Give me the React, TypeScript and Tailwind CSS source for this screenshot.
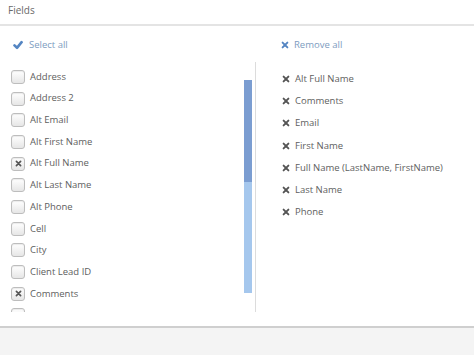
import React from 'react';

// field lists
const allFields = [
  { name: 'Address', on: false },
  { name: 'Address 2', on: false },
  { name: 'Alt Email', on: false },
  { name: 'Alt First Name', on: false },
  { name: 'Alt Full Name', on: true },
  { name: 'Alt Last Name', on: false },
  { name: 'Alt Phone', on: false },
  { name: 'Cell', on: false },
  { name: 'City', on: false },
  { name: 'Client Lead ID', on: false },
  { name: 'Comments', on: true },
];

const picked = ['Alt Full Name', 'Comments', 'Email', 'First Name', 'Full Name (LastName, FirstName)', 'Last Name', 'Phone'];

const HeavyX = ({ className }: { className?: string }) => (
  <svg viewBox="0 0 10 10" className={className} fill="none" stroke="currentColor" strokeWidth="2.4" strokeLinecap="round">
    <path d="M2 2 L8 8 M8 2 L2 8" />
  </svg>
);

const Tick = ({ className }: { className?: string }) => (
  <svg viewBox="0 0 10 10" className={className} fill="none" stroke="currentColor" strokeWidth="2.6" strokeLinecap="round" strokeLinejoin="round">
    <path d="M1.5 5.4 L4 7.8 L8.6 2.2" />
  </svg>
);

const Checkbox = ({ on }: { on: boolean }) => (
  <span className="flex h-[14px] w-[14px] shrink-0 items-center justify-center rounded-[3px] border border-[#bdbdbd] bg-gradient-to-b from-white to-[#e6e6e6] shadow-[inset_0_1px_1px_rgba(0,0,0,0.08)]">
    {on && <HeavyX className="h-[7px] w-[7px] text-[#555]" />}
  </span>
);

const App = () => {
  return (
    <div className="flex h-[355px] w-[474px] flex-col overflow-hidden bg-white font-['Open_Sans',sans-serif] text-[9.5px] text-[#606060]">
      {/* header */}
      <div className="flex h-[26px] shrink-0 items-center border-b-2 border-[#e4e4e4] px-2 pb-[3px] text-[10px] text-[#6a6a6a]">Fields</div>

      <div className="flex h-[300px] shrink-0">
        {/* left column */}
        <div className="flex w-[256px] flex-col">
          <div className="mt-[9px] flex h-[20px] items-center gap-[6px] pl-[13px] text-[#7d9cc0]">
            <Tick className="h-[10px] w-[10px] text-[#5485c2]" />
            <span>Select all</span>
          </div>
          <div className="mt-[7px] flex h-[250px] border-r border-[#dcdcdc]">
            <div className="flex-1 overflow-hidden pt-[4px]">
              {allFields.map((f) => (
                <div key={f.name} className="flex h-[21.7px] items-center gap-[5px] pl-[11px]">
                  <Checkbox on={f.on} />
                  <span>{f.name}</span>
                </div>
              ))}
              {/* next row, cut by the scroll box */}
              <div className="flex h-[21.7px] items-center pl-[11px]">
                <Checkbox on={false} />
              </div>
            </div>
            <div className="mr-[3px] w-[8px] pt-[18px]">
              <div className="h-[102px] bg-[#7b9dd1]" />
              <div className="h-[111px] bg-[#a5c7ed]" />
            </div>
          </div>
        </div>

        {/* right column */}
        <div className="flex flex-1 flex-col pl-[25px]">
          <div className="mt-[9px] flex h-[20px] items-center gap-[5px] text-[#7d9cc0]">
            <HeavyX className="h-[8px] w-[8px] text-[#5485c2]" />
            <span>Remove all</span>
          </div>
          <div className="mt-[13px]">
            {picked.map((p) => (
              <div key={p} className="flex h-[22.2px] items-center gap-[5px] pl-[1px]">
                <HeavyX className="h-[8px] w-[8px] text-[#555]" />
                <span>{p}</span>
              </div>
            ))}
          </div>
        </div>
      </div>

      {/* footer */}
      <div className="flex-1 border-t-2 border-[#cfcfcf] bg-[#f4f4f4]" />
    </div>
  );
};

export default App;
